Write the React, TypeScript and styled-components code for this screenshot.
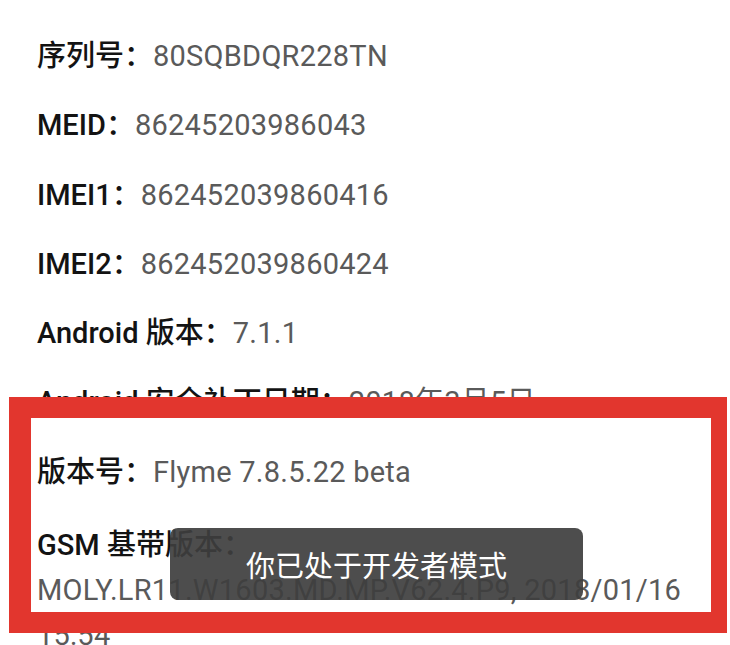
import React from "react";
import styled, { createGlobalStyle } from "styled-components";

const GlobalStyle = createGlobalStyle`
  html, body {
    margin: 0;
    padding: 0;
    background: #fff;
  }
  body {
    font-family: Roboto, "Noto Sans CJK SC", sans-serif;
    overflow: hidden;
  }
`;

interface InfoRow {
  label: string;
  value: string;
}

const rows: InfoRow[] = [
  { label: "序列号：", value: "80SQBDQR228TN" },
  { label: "MEID：", value: "86245203986043" },
  { label: "IMEI1：", value: "862452039860416" },
  { label: "IMEI2：", value: "862452039860424" },
  { label: "Android 版本：", value: "7.1.1" },
  { label: "Android 安全补丁日期：", value: "2018年3月5日" },
  { label: "版本号：", value: "Flyme 7.8.5.22 beta" },
];

function App() {
  return (
    <>
      <GlobalStyle />
      <Screen>
        <List>
          {rows.map((row) => (
            <Item key={row.label}>
              <Label>{row.label}</Label>
              <Value>{row.value}</Value>
            </Item>
          ))}
          <Item $multi>
            <Label>GSM 基带版本：</Label>
            <Value as="div">MOLY.LR11.W1603.MD.MP.V62.4.P9, 2018/01/16</Value>
            <Value as="div">15:54</Value>
          </Item>
        </List>

        {/* annotation frame + toast sit over the list */}
        <Highlight />
        <Toast>你已处于开发者模式</Toast>
      </Screen>
    </>
  );
}

const Screen = styled.div`
  position: relative;
  width: 730px;
  height: 645px;
  overflow: hidden;
  background: #fff;
`;

const List = styled.div`
  display: flex;
  flex-direction: column;
  padding-top: 22px;
`;

const Item = styled.div<{ $multi?: boolean }>`
  padding: ${(p) => (p.$multi ? "16px 37px 0" : "14px 37px 14.3px")};
  line-height: ${(p) => (p.$multi ? "45px" : "41px")};
  font-size: 29px;
  white-space: nowrap;
`;

const Label = styled.span`
  color: #131313;
  font-weight: 500;
`;

const Value = styled.span`
  color: #5a5a5a;
  font-weight: 400;
  letter-spacing: 0.25px;
`;

const Highlight = styled.div`
  position: absolute;
  left: 9px;
  top: 397px;
  width: 718px;
  height: 236px;
  box-sizing: border-box;
  border-style: solid;
  border-color: #e2362e;
  border-width: 21px 16px 21px 22px;
`;

const Toast = styled.div`
  position: absolute;
  left: 170px;
  top: 528px;
  width: 413px;
  height: 72px;
  border-radius: 8px;
  background: rgba(62, 62, 62, 0.92);
  color: #fff;
  font-size: 29px;
  display: flex;
  align-items: center;
  justify-content: center;
`;

export default App;
